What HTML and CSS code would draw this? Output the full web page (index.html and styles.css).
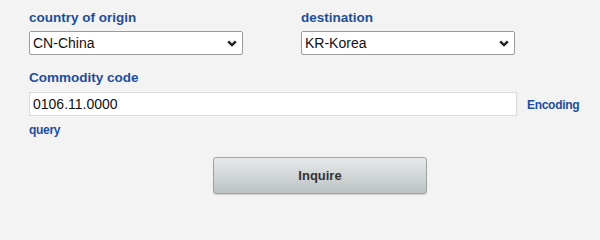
FILE: index.html
```html
<!DOCTYPE html>
<html lang="en">
<head>
<meta charset="utf-8">
<title>Tariff query</title>
<link rel="stylesheet" href="styles.css">
</head>
<body>
<div class="form">
  <div class="row">
    <div class="field">
      <label class="label" for="origin">country of origin</label>
      <div class="select-wrap">
        <select id="origin" class="select">
          <option>CN-China</option>
        </select>
        <svg class="chevron" width="10" height="7" viewBox="0 0 10 7"><path d="M1.2 1.3 L5 5 L8.8 1.3" fill="none" stroke="#1e1e1e" stroke-width="2.4"/></svg>
      </div>
    </div>
    <div class="field">
      <label class="label" for="dest">destination</label>
      <div class="select-wrap">
        <select id="dest" class="select">
          <option>KR-Korea</option>
        </select>
        <svg class="chevron" width="10" height="7" viewBox="0 0 10 7"><path d="M1.2 1.3 L5 5 L8.8 1.3" fill="none" stroke="#1e1e1e" stroke-width="2.4"/></svg>
      </div>
    </div>
  </div>
  <div class="field code-field">
    <label class="label" for="code">Commodity code</label>
    <div class="code-line"><input id="code" class="input" type="text" value="0106.11.0000"><a class="link" href="#">Encoding query</a></div>
  </div>
  <div class="actions">
    <button class="button" type="button">Inquire</button>
  </div>
</div>
</body>
</html>
```
FILE: styles.css
```css
html, body {
  margin: 0;
  padding: 0;
  background: #f3f3f3;
}
body {
  font-family: "Liberation Sans", Arial, sans-serif;
  width: 600px;
  height: 229px;
  overflow: hidden;
}
.form {
  width: 560px;
  padding: 10px 0 0 29px;
}
.row {
  display: flex;
}
.field {
  width: 272px;
}
.label {
  display: block;
  font-size: 13.5px;
  font-weight: bold;
  line-height: 16px;
  color: #1d4e9b;
  margin-bottom: 5px;
}
.select-wrap {
  position: relative;
  width: 214px;
  height: 24px;
}
.select {
  appearance: none;
  -webkit-appearance: none;
  box-sizing: border-box;
  width: 214px;
  height: 24px;
  margin: 0;
  padding: 0 20px 0 3px;
  border: 1px solid #9a9a9a;
  border-radius: 2px;
  background: #fff;
  font-family: "Liberation Sans", Arial, sans-serif;
  font-size: 14px;
  color: #111;
  outline: none;
}
.chevron {
  position: absolute;
  right: 6px;
  top: 9px;
  pointer-events: none;
}
.code-field {
  width: 560px;
  margin-top: 15px;
}
.code-field .label {
  margin-bottom: 6px;
}
.code-line {
  line-height: 24px;
}
.input {
  box-sizing: border-box;
  width: 488px;
  height: 24px;
  margin: 0 10px 0 0;
  padding: 0 3px;
  border: 1px solid #dadada;
  background: #fff;
  font-family: "Liberation Sans", Arial, sans-serif;
  font-size: 14px;
  color: #111;
  vertical-align: baseline;
  outline: none;
}
.link {
  font-size: 12px;
  letter-spacing: -0.3px;
  font-weight: bold;
  color: #1d4e9b;
  text-decoration: none;
}
.actions {
  margin: 15px 0 0 184px;
}
.button {
  box-sizing: border-box;
  width: 214px;
  height: 37px;
  border: 1px solid #9ea3a3;
  border-radius: 3px;
  background: linear-gradient(#e6e9e9, #bcc2c2);
  box-shadow: 0 1px 1px rgba(0,0,0,0.15);
  font-family: "Liberation Sans", Arial, sans-serif;
  font-size: 13px;
  font-weight: bold;
  color: #333;
  padding: 0;
}
```
